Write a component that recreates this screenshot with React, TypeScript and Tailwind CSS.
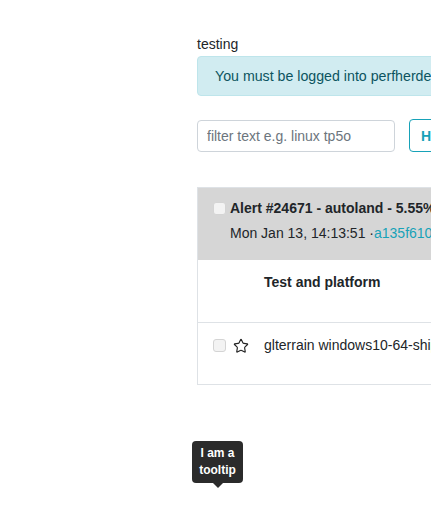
import React from "react";
import { Star } from "lucide-react";

function Box() {
  return (
    <span className="inline-block w-[13px] h-[13px] rounded-[3px] border border-[#d4d4d4] bg-[#f3f3f3] shrink-0" />
  );
}

export default function App() {
  return (
    <div className="relative w-[431px] h-[514px] overflow-hidden bg-white font-['Liberation_Sans',Arial,sans-serif] text-[14px] text-[#212529]">
      <div className="ml-[197px] pt-[34px] w-[700px]">
        <div className="leading-[21px]">testing</div>
        <div className="mt-[1px] rounded-[4px] border border-[#bee5eb] bg-[#d1ecf1] text-[#0c5460] px-[17px] py-[9px] leading-[20px] text-[14.2px] whitespace-nowrap">
          You must be logged into perfherder to modify alerts
        </div>
        <div className="mt-[23px] flex items-center gap-[14px]">
          <input
            className="w-[198px] h-[32px] rounded-[4px] border border-[#ced4da] px-[9px] text-[14px] outline-none placeholder:text-[#6c757d]"
            placeholder="filter text e.g. linux tp5o"
          />
          <button className="h-[33px] rounded-[4px] border border-[#17a2b8] px-[11px] font-bold text-[#17a2b8] leading-[20px] whitespace-nowrap">
            Hide downstream / reassigned to / invalid
          </button>
        </div>
        <div className="mt-[35px] border border-[#dee2e6]">
          <div className="h-[72px] bg-[#d6d6d6] pl-[15px] pt-[10px]">
            <div className="flex items-center gap-[4px] leading-[21px] whitespace-nowrap">
              <Box />
              <span className="font-bold">Alert #24671 - autoland - 5.55% regression</span>
            </div>
            <div className="mt-[4px] pl-[17px] leading-[21px] whitespace-nowrap">
              Mon Jan 13, 14:13:51 ·<a className="text-[14px] text-[#17a2b8]">a135f6108c8b</a>
            </div>
          </div>
          <div className="flex h-[63px] border-b border-[#dee2e6] pt-[12px] leading-[21px]">
            <div className="w-[66px] shrink-0" />
            <div className="font-bold whitespace-nowrap">Test and platform</div>
          </div>
          <div className="flex h-[61px] pt-[12px] leading-[21px]">
            <div className="w-[66px] shrink-0 pl-[15px] flex items-center gap-[7px] h-[21px]">
              <Box />
              <Star size={16} strokeWidth={1.7} className="text-[#222] mt-[1px]" />
            </div>
            <div className="whitespace-nowrap">glterrain windows10-64-shippable opt</div>
          </div>
        </div>
      </div>
      <div className="absolute left-[192px] top-[441px] flex flex-col items-center">
        <div className="w-[51px] h-[42px] rounded-[4px] bg-[#2b2b2b] text-white text-[12px] font-bold leading-[17px] text-center flex flex-col justify-center">
          <span>I am a</span>
          <span>tooltip</span>
        </div>
        <div className="w-0 h-0 border-l-[5px] border-r-[5px] border-t-[5px] border-l-transparent border-r-transparent border-t-[#2b2b2b]" />
      </div>
    </div>
  );
}
